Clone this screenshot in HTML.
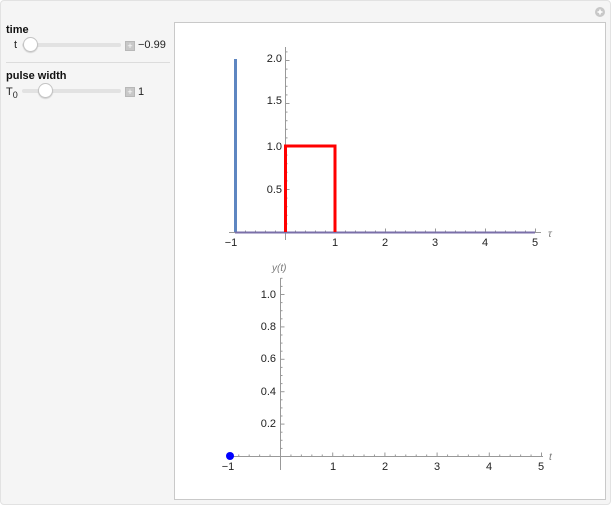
<!DOCTYPE html>
<html><head><meta charset="utf-8"><style>
html,body{margin:0;padding:0;width:611px;height:506px;overflow:hidden;background:#fff;font-family:"Liberation Sans",sans-serif}
#outer{position:absolute;left:0;top:0;width:609px;height:503px;background:#f5f5f5;border:1px solid #e2e2e2;border-radius:4px}
#plot{position:absolute;left:174px;top:22px;width:430px;height:476px;background:#fff;border:1px solid #c9c9c9}
.lbl{position:absolute;font-size:11px;font-weight:bold;color:#111}
.txt{position:absolute;font-size:11px;color:#222}
.track{position:absolute;height:4px;background:#e2e2e2;border-radius:2px}
.knob{position:absolute;width:13px;height:13px;border-radius:50%;background:#fff;border:1px solid #c4c4c4;box-shadow:0 1px 1px rgba(0,0,0,.15)}
.pl{position:absolute;width:8px;height:8px;background:#c8c8c8;border:1px solid #b8b8b8;color:#fff;font-size:9px;line-height:8px;text-align:center}
svg text{font-family:"Liberation Sans",sans-serif;font-size:11px;fill:#222}
</style></head><body>
<div id="outer"></div>
<svg style="position:absolute;left:594px;top:6px" width="12" height="12"><circle cx="6" cy="6" r="5" fill="#c8c8c8"/><path d="M3.5 6H8.5M6 3.5V8.5" stroke="#fff" stroke-width="1.5"/></svg>
<div class="lbl" style="left:6px;top:24px">time</div>
<div class="txt" style="left:14px;top:39px">t</div>
<div class="track" style="left:22px;top:43px;width:99px"></div>
<div class="knob" style="left:23px;top:37px"></div>
<div class="pl" style="left:125px;top:41px">+</div>
<div class="txt" style="left:138px;top:39px">−0.99</div>
<div style="position:absolute;left:6px;top:62px;width:164px;height:1px;background:#dcdcdc"></div>
<div class="lbl" style="left:6px;top:70px">pulse width</div>
<div class="txt" style="left:6px;top:86px">T<sub style="font-size:9px">0</sub></div>
<div class="track" style="left:22px;top:89px;width:99px"></div>
<div class="knob" style="left:38px;top:83px"></div>
<div class="pl" style="left:125px;top:87px">+</div>
<div class="txt" style="left:138px;top:86px">1</div>
<div id="plot"></div>
<svg id="s" style="position:absolute;left:0;top:0" width="611" height="506">
<g id="ticks" stroke="#999" stroke-width="1"></g>
<line x1="229" y1="232.5" x2="541" y2="232.5" stroke="#999"/>
<line x1="285.5" y1="47" x2="285.5" y2="240" stroke="#999"/>
<line x1="235.5" y1="59" x2="235.5" y2="232" stroke="#5e86c1" stroke-width="3"/>
<line x1="235" y1="232.5" x2="535" y2="232.5" stroke="#7a6fa8" stroke-width="2"/>
<polyline points="285.5,232 285.5,146 335,146 335,232" fill="none" stroke="#ff0000" stroke-width="3"/>
<text x="231" y="246" text-anchor="middle">−1</text>
<text x="335" y="246" text-anchor="middle">1</text>
<text x="385" y="246" text-anchor="middle">2</text>
<text x="435" y="246" text-anchor="middle">3</text>
<text x="485" y="246" text-anchor="middle">4</text>
<text x="535" y="246" text-anchor="middle">5</text>
<text x="282" y="62" text-anchor="end">2.0</text>
<text x="282" y="104" text-anchor="end">1.5</text>
<text x="282" y="150" text-anchor="end">1.0</text>
<text x="282" y="193" text-anchor="end">0.5</text>
<text x="548" y="237" font-style="italic" style="fill:#777;font-size:10px">τ</text>
<line x1="228" y1="456.5" x2="543" y2="456.5" stroke="#999"/>
<line x1="280.5" y1="278" x2="280.5" y2="470" stroke="#999"/>
<circle cx="230" cy="456" r="4" fill="#0000ff"/>
<text x="228" y="470" text-anchor="middle">−1</text>
<text x="333" y="470" text-anchor="middle">1</text>
<text x="385" y="470" text-anchor="middle">2</text>
<text x="437" y="470" text-anchor="middle">3</text>
<text x="489" y="470" text-anchor="middle">4</text>
<text x="541" y="470" text-anchor="middle">5</text>
<text x="276" y="298" text-anchor="end">1.0</text>
<text x="276" y="330" text-anchor="end">0.8</text>
<text x="276" y="362" text-anchor="end">0.6</text>
<text x="276" y="395" text-anchor="end">0.4</text>
<text x="276" y="427" text-anchor="end">0.2</text>
<text x="272" y="271" font-style="italic" style="fill:#777;font-size:10px">y(t)</text>
<text x="549" y="460" font-style="italic" style="fill:#777;font-size:10px">t</text>
</svg>
<script>
var g=document.getElementById('ticks'),h='';
function L(a,b,c,d){h+='<line x1="'+a+'" y1="'+b+'" x2="'+c+'" y2="'+d+'"/>';}
for(var i=-5;i<=25;i++){var x=285.5+i*10;var M=i%5==0;L(x,232.5-(M?4:2),x,232.5);}
for(var i=1;i<=21;i++){var y=232.5-i*8.6;L(285.5,y,285.5+(i%5==0?4:2),y);}
for(var i=-5;i<=25;i++){var x=280.5+i*10.44;var M=i%5==0;L(x,456.5-(M?4:2),x,456.5);}
for(var i=1;i<=22;i++){var y=456.5-i*8.1;L(280.5,y,280.5+(i%4==0?4:2),y);}
g.innerHTML=h;
</script>
</body></html>
